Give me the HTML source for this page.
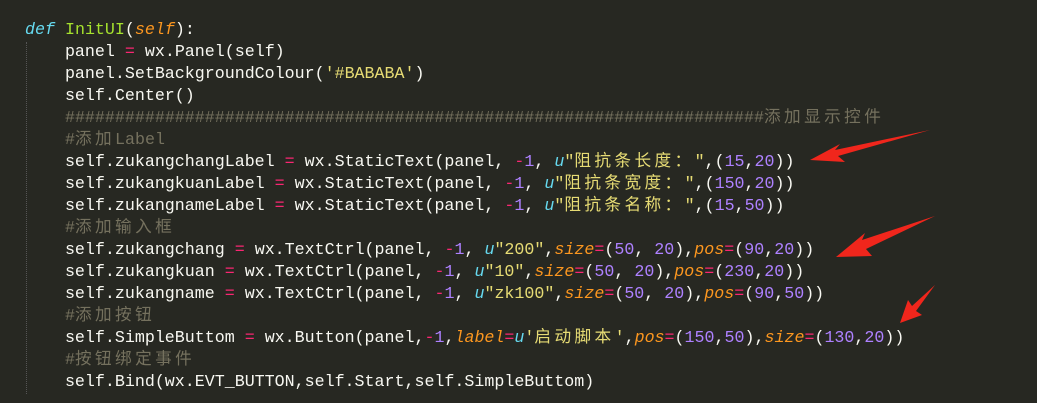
<!DOCTYPE html><html><head><meta charset="utf-8"><style>
body{margin:0;width:1037px;height:403px;background:#272822;overflow:hidden;position:relative}
pre{position:absolute;left:25px;top:19px;margin:0;font-family:"Liberation Mono","Noto Sans CJK SC",monospace;font-size:16.65px;line-height:22px;color:#f8f8f2;letter-spacing:0}
.c{color:#75715e}.k{color:#66d9ef;font-style:italic}.f{color:#a6e22e}.a{color:#fd971f;font-style:italic}.o{color:#f92672}.s{color:#e6db74}.n{color:#ae81ff}
.z{letter-spacing:3.4px}
.g{position:absolute;left:26px;top:42px;height:352px;border-left:1px dotted #555}
</style></head><body>
<div class="g"></div>
<pre><span class="k">def</span> <span class="f">InitUI</span>(<span class="a">self</span>):
    panel <span class="o">=</span> wx.Panel(self)
    panel.SetBackgroundColour(<span class="s">'#BABABA'</span>)
    self.Center()
    <span class="c">######################################################################<span class="z">添加显示控件</span></span>
    <span class="c">#<span class="z">添加</span>Label</span>
    self.zukangchangLabel <span class="o">=</span> wx.StaticText(panel, <span class="o">-</span><span class="n">1</span>, <span class="k">u</span><span class="s">"<span class="z">阻抗条长度：</span>"</span>,(<span class="n">15</span>,<span class="n">20</span>))
    self.zukangkuanLabel <span class="o">=</span> wx.StaticText(panel, <span class="o">-</span><span class="n">1</span>, <span class="k">u</span><span class="s">"<span class="z">阻抗条宽度：</span>"</span>,(<span class="n">150</span>,<span class="n">20</span>))
    self.zukangnameLabel <span class="o">=</span> wx.StaticText(panel, <span class="o">-</span><span class="n">1</span>, <span class="k">u</span><span class="s">"<span class="z">阻抗条名称：</span>"</span>,(<span class="n">15</span>,<span class="n">50</span>))
    <span class="c">#<span class="z">添加输入框</span></span>
    self.zukangchang <span class="o">=</span> wx.TextCtrl(panel, <span class="o">-</span><span class="n">1</span>, <span class="k">u</span><span class="s">"200"</span>,<span class="a">size</span><span class="o">=</span>(<span class="n">50</span>, <span class="n">20</span>),<span class="a">pos</span><span class="o">=</span>(<span class="n">90</span>,<span class="n">20</span>))
    self.zukangkuan <span class="o">=</span> wx.TextCtrl(panel, <span class="o">-</span><span class="n">1</span>, <span class="k">u</span><span class="s">"10"</span>,<span class="a">size</span><span class="o">=</span>(<span class="n">50</span>, <span class="n">20</span>),<span class="a">pos</span><span class="o">=</span>(<span class="n">230</span>,<span class="n">20</span>))
    self.zukangname <span class="o">=</span> wx.TextCtrl(panel, <span class="o">-</span><span class="n">1</span>, <span class="k">u</span><span class="s">"zk100"</span>,<span class="a">size</span><span class="o">=</span>(<span class="n">50</span>, <span class="n">20</span>),<span class="a">pos</span><span class="o">=</span>(<span class="n">90</span>,<span class="n">50</span>))
    <span class="c">#<span class="z">添加按钮</span></span>
    self.SimpleButtom <span class="o">=</span> wx.Button(panel,<span class="o">-</span><span class="n">1</span>,<span class="a">label</span><span class="o">=</span><span class="k">u</span><span class="s">'<span class="z">启动脚本</span>'</span>,<span class="a">pos</span><span class="o">=</span>(<span class="n">150</span>,<span class="n">50</span>),<span class="a">size</span><span class="o">=</span>(<span class="n">130</span>,<span class="n">20</span>))
    <span class="c">#<span class="z">按钮绑定事件</span></span>
    self.Bind(wx.EVT_BUTTON,self.Start,self.SimpleButtom)</pre>
<svg width="1037" height="403" style="position:absolute;left:0;top:0">
<g fill="#f0261c">
<polygon points="930,130 835,150 840,144 810,160 845,162 838,156"/>
<polygon points="935,216 862,240 865,233 836,257 872,256 866,249"/>
<polygon points="935,285 912,306 908,300 900,323 922,315 916,311"/>
</g></svg>
</body></html>
